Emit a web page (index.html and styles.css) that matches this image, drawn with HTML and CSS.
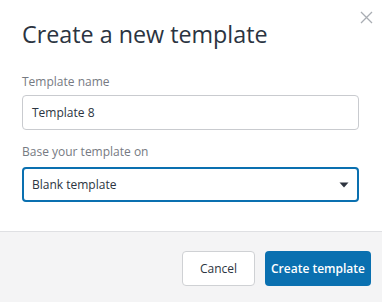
FILE: index.html
```html
<!DOCTYPE html>
<html>
<head>
<meta charset="utf-8">
<link rel="stylesheet" href="styles.css">
</head>
<body>
<div class="modal">
  <div class="body">
    <button class="close" aria-label="Close">
      <svg width="13" height="13" viewBox="0 0 13 13"><path d="M1 1L12 12M12 1L1 12" stroke="#a9adb3" stroke-width="1.3" fill="none"/></svg>
    </button>
    <h1 class="title">Create a new template</h1>
    <label class="label">Template name</label>
    <div class="field">Template 8</div>
    <label class="label label2">Base your template on</label>
    <div class="field select">
      <span>Blank template</span>
      <svg class="caret" width="10" height="6" viewBox="0 0 10 6"><path d="M0.5 0.5H9.5L5 5.5Z" fill="#2e3440"/></svg>
    </div>
  </div>
  <div class="footer">
    <button class="btn cancel">Cancel</button>
    <button class="btn primary">Create template</button>
  </div>
</div>
</body>
</html>
```
FILE: styles.css
```css
html, body {
  margin: 0;
  padding: 0;
  background: #ffffff;
}
.modal {
  width: 382px;
  height: 302px;
  font-family: "Open Sans", sans-serif;
  display: flex;
  flex-direction: column;
}
.body {
  position: relative;
  padding: 18px 23px 0 22px;
  height: 213px;
  border-bottom: 1px solid #dfe0e3;
}
.close {
  position: absolute;
  top: 11px;
  right: 9px;
  border: 0;
  background: none;
  padding: 0;
  width: 13px;
  height: 13px;
}
.close svg { display: block; }
.title {
  margin: 0 0 24px 0;
  font-size: 23.3px;
  line-height: 32px;
  font-weight: 400;
  color: #2b3441;
}
.label {
  display: block;
  font-size: 12px;
  line-height: 16px;
  color: #767a82;
  margin-bottom: 5px;
}
.label2 {
  margin-top: 14px;
  margin-bottom: 7px;
}
.field {
  box-sizing: border-box;
  height: 35px;
  border: 1px solid #c9cbcf;
  border-radius: 4px;
  padding: 0 9px;
  font-size: 12px;
  color: #2b3441;
  display: flex;
  align-items: center;
}
.select {
  border: 2px solid #0a70b0;
  padding: 0 8px;
  justify-content: space-between;
}
.caret { display: block; }
.footer {
  flex: 1;
  background: #f4f4f5;
  display: flex;
  justify-content: flex-end;
  align-items: flex-start;
  gap: 10px;
  padding: 19px 11px 0 0;
}
.btn {
  box-sizing: border-box;
  height: 35px;
  border-radius: 4px;
  font-family: "Open Sans", sans-serif;
  font-size: 12px;
  padding: 0;
}
.cancel {
  width: 73px;
  background: #ffffff;
  border: 1px solid #cfd1d4;
  color: #2b3441;
}
.primary {
  width: 106px;
  background: #0a70b0;
  border: 0;
  color: #ffffff;
  font-weight: 600;
}
```
